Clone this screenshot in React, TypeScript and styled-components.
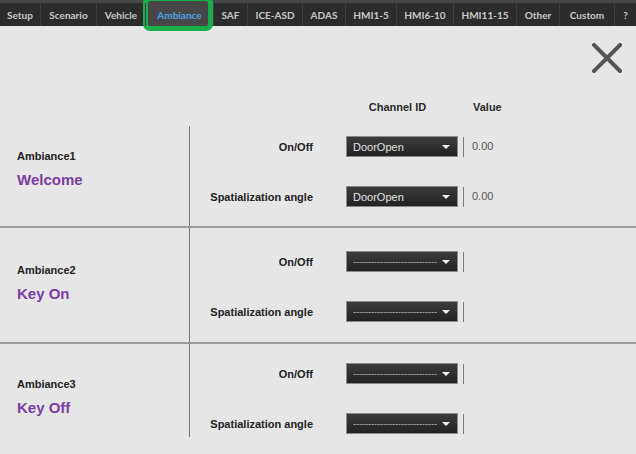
import React from 'react';
import styled, { createGlobalStyle } from 'styled-components';

const GlobalStyle = createGlobalStyle`
  html, body {
    margin: 0;
    padding: 0;
    background: #e6e6e6;
  }
`;

const Page = styled.div`
  width: 636px;
  height: 454px;
  background: #e6e6e6;
  overflow: hidden;
  font-family: "Liberation Sans", Arial, sans-serif;
`;

const TabBar = styled.div`
  display: flex;
  height: 23px;
  background: #2c2c2c;
  border-top: 3px solid #464646;
  position: relative;
  z-index: 2;
`;

const Tab = styled.div<{ w: number; active?: boolean; first?: boolean }>`
  width: ${p => p.w}px;
  flex: none;
  box-sizing: border-box;
  display: flex;
  align-items: center;
  justify-content: center;
  font-family: Lato, "Liberation Sans", sans-serif;
  font-weight: 700;
  font-size: 10px;
  color: ${p => (p.active ? '#4fa3e3' : '#c9c9c9')};
  border-left: ${p => (p.first ? 'none' : '1px solid #3f3f3f')};
  position: relative;

  ${p =>
    p.active &&
    `
    &::before {
      content: '';
      position: absolute;
      top: -7px;
      left: -3px;
      right: 0;
      bottom: -5px;
      background: #474747;
      border: 5px solid #19ae4a;
      border-radius: 7px;
      z-index: -1;
    }
  `}
`;

const TabLabel = styled.span`
  position: relative;
`;

const TopRow = styled.div`
  height: 74px;
  display: flex;
  justify-content: flex-end;
  align-items: flex-start;
  padding-right: 14px;
`;

const CloseButton = styled.div`
  margin-top: 17px;
  width: 30px;
  height: 30px;
`;

const HeaderRow = styled.div`
  height: 26px;
  display: flex;
  padding-left: 346px;
  font-weight: 700;
  font-size: 11px;
  color: #2a2a2a;
  line-height: 14px;
`;

const ChannelHead = styled.div`
  width: 103px;
  text-align: center;
`;

const ValueHead = styled.div`
  margin-left: 24px;
`;

const Section = styled.div<{ h: number; last?: boolean }>`
  display: flex;
  height: ${p => p.h}px;
  border-bottom: ${p => (p.last ? 'none' : '2px solid #9a9a9a')};
`;

const LeftCell = styled.div<{ pt: number }>`
  width: 190px;
  flex: none;
  box-sizing: border-box;
  border-right: 1px solid #777;
  padding: ${p => p.pt}px 0 0 17px;
`;

const AmbName = styled.div`
  font-weight: 700;
  font-size: 11px;
  line-height: 14px;
  color: #222;
`;

const AmbTitle = styled.div`
  font-weight: 700;
  font-size: 15px;
  line-height: 18px;
  color: #7b3ea2;
  margin-top: 8px;
`;

const RightCell = styled.div<{ pt: number }>`
  flex: 1;
  display: flex;
  flex-direction: column;
  gap: 29px;
  padding-top: ${p => p.pt}px;
`;

const ParamRow = styled.div`
  display: flex;
  align-items: center;
  height: 21px;
`;

const ParamLabel = styled.div`
  width: 123px;
  text-align: right;
  font-weight: 700;
  font-size: 11px;
  color: #222;
`;

const Select = styled.div`
  margin-left: 33px;
  width: 112px;
  height: 21px;
  box-sizing: border-box;
  border: 1px solid #8a8a8a;
  background: linear-gradient(#3c3c3c, #222);
  display: flex;
  align-items: center;
  justify-content: space-between;
  padding: 0 7px 0 6px;
`;

const SelectText = styled.span<{ empty?: boolean }>`
  font-size: ${p => (p.empty ? '9px' : '11px')};
  color: ${p => (p.empty ? '#bdbdbd' : '#e2e2e2')};
  white-space: nowrap;
  overflow: hidden;
`;

const Caret = styled.span`
  width: 0;
  height: 0;
  border-left: 4px solid transparent;
  border-right: 4px solid transparent;
  border-top: 4px solid #f0f0f0;
  flex: none;
`;

const ValueDivider = styled.div`
  margin-left: 5px;
  width: 1px;
  height: 20px;
  background: #7a7a7a;
`;

const Value = styled.div`
  margin-left: 8px;
  font-size: 11px;
  color: #555;
  margin-top: -2px;
`;

type Param = { label: string; channel?: string; value?: string };
type Ambiance = {
  name: string;
  title: string;
  height: number;
  leftPad: number;
  rightPad: number;
  params: Param[];
};

const tabs: { label: string; w: number }[] = [
  { label: 'Setup', w: 40 },
  { label: 'Scenario', w: 56 },
  { label: 'Vehicle', w: 49 },
  { label: 'Ambiance', w: 68 },
  { label: 'SAF', w: 34 },
  { label: 'ICE-ASD', w: 55 },
  { label: 'ADAS', w: 43 },
  { label: 'HMI1-5', w: 51 },
  { label: 'HMI6-10', w: 57 },
  { label: 'HMI11-15', w: 63 },
  { label: 'Other', w: 43 },
  { label: 'Custom', w: 55 },
  { label: '?', w: 22 },
];

const ambiances: Ambiance[] = [
  {
    name: 'Ambiance1',
    title: 'Welcome',
    height: 100,
    leftPad: 23,
    rightPad: 10,
    params: [
      { label: 'On/Off', channel: 'DoorOpen', value: '0.00' },
      { label: 'Spatialization angle', channel: 'DoorOpen', value: '0.00' },
    ],
  },
  {
    name: 'Ambiance2',
    title: 'Key On',
    height: 114,
    leftPad: 35,
    rightPad: 23,
    params: [{ label: 'On/Off' }, { label: 'Spatialization angle' }],
  },
  {
    name: 'Ambiance3',
    title: 'Key Off',
    height: 93,
    leftPad: 33,
    rightPad: 19,
    params: [{ label: 'On/Off' }, { label: 'Spatialization angle' }],
  },
];

const EMPTY = '-'.repeat(28);

const App: React.FC = () => {
  return (
    <Page>
      <GlobalStyle />
      <TabBar>
        {tabs.map((t, i) => (
          <Tab key={t.label} w={t.w} first={i === 0} active={t.label === 'Ambiance'}>
            <TabLabel>{t.label}</TabLabel>
          </Tab>
        ))}
      </TabBar>

      <TopRow>
        <CloseButton>
          <svg width="30" height="30" viewBox="0 0 30 30">
            <path d="M2 2L28 28M28 2L2 28" stroke="#555" strokeWidth="4" strokeLinecap="square" />
          </svg>
        </CloseButton>
      </TopRow>

      <HeaderRow>
        <ChannelHead>Channel ID</ChannelHead>
        <ValueHead>Value</ValueHead>
      </HeaderRow>

      {ambiances.map((a, i) => (
        <Section key={a.name} h={a.height} last={i === ambiances.length - 1}>
          <LeftCell pt={a.leftPad}>
            <AmbName>{a.name}</AmbName>
            <AmbTitle>{a.title}</AmbTitle>
          </LeftCell>
          <RightCell pt={a.rightPad}>
            {a.params.map(p => (
              <ParamRow key={p.label}>
                <ParamLabel>{p.label}</ParamLabel>
                <Select>
                  <SelectText empty={!p.channel}>{p.channel ?? EMPTY}</SelectText>
                  <Caret />
                </Select>
                <ValueDivider />
                {p.value && <Value>{p.value}</Value>}
              </ParamRow>
            ))}
          </RightCell>
        </Section>
      ))}
    </Page>
  );
};

export default App;
